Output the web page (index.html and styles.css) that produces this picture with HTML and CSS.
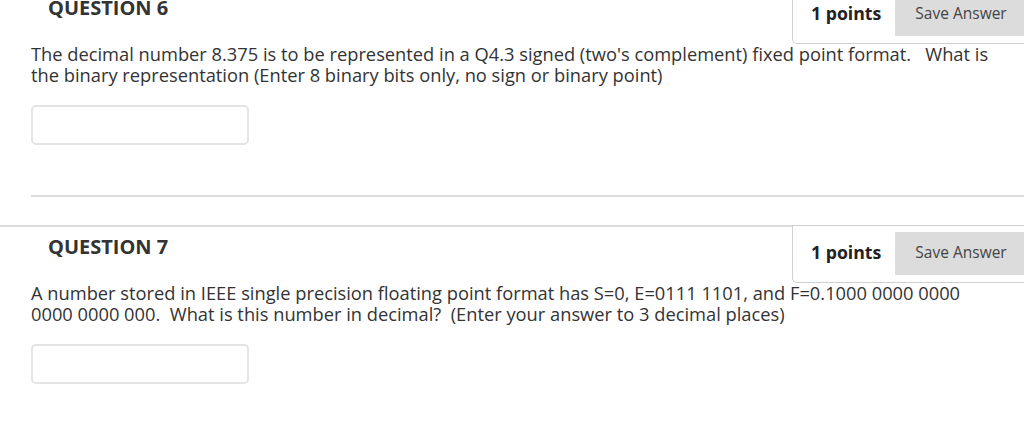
FILE: index.html
```html
<!DOCTYPE html>
<html>
<head>
<meta charset="utf-8">
<link rel="stylesheet" href="styles.css">
</head>
<body>
<div class="page">
  <section class="question">
    <div class="qhead">
      <h3 class="qtitle">QUESTION 6</h3>
      <div class="points-box">
        <span class="points">1 points</span>
        <button class="save">Save Answer</button>
      </div>
    </div>
    <div class="qbody">
      <p class="qtext">The decimal number 8.375 is to be represented in a Q4.3 signed (two's complement) fixed point format.&nbsp;&nbsp; What is the binary representation (Enter 8 binary bits only, no sign or binary point)</p>
      <input class="answer" type="text">
      <div class="divider"></div>
    </div>
  </section>
  <section class="question">
    <div class="qhead">
      <h3 class="qtitle">QUESTION 7</h3>
      <div class="points-box">
        <span class="points">1 points</span>
        <button class="save">Save Answer</button>
      </div>
    </div>
    <div class="qbody">
      <p class="qtext">A number stored in IEEE single precision floating point format has S=0, E=0111 1101, and F=0.1000 0000 0000 0000 0000 000.&nbsp; What is this number in decimal?&nbsp; (Enter your answer to 3 decimal places)</p>
      <input class="answer" type="text">
      <div class="divider"></div>
    </div>
  </section>
</div>
</body>
</html>
```
FILE: styles.css
```css
html, body {
  margin: 0;
  padding: 0;
  background: #fff;
  overflow: hidden;
}
body {
  font-family: "Open Sans", "Liberation Sans", sans-serif;
  color: #333;
}
.page {
  margin-top: -14px;
}
.question {
  border-top: 2px solid #dcdcdc;
  padding-bottom: 28px;
}
.qhead {
  display: flex;
  justify-content: space-between;
  align-items: flex-start;
  margin-top: -2px;
}
.qtitle {
  margin: 0;
  padding: 9px 0 0 48px;
  font-size: 20px;
  font-weight: 700;
  color: #333;
  line-height: 26px;
}
.points-box {
  display: flex;
  align-items: center;
  gap: 14px;
  width: 213px;
  height: 43px;
  padding: 6px 0 7px 18px;
  border: 1px solid #d0d0d0;
  border-right: none;
  border-radius: 0 0 0 5px;
  background: #fff;
}
.points {
  font-size: 17.7px;
  font-weight: 700;
  color: #222;
  margin-top: -4px;
}
.save {
  flex: 1;
  height: 43px;
  border: none;
  background: #dcdcdc;
  color: #444;
  font-family: "Open Sans", "Liberation Sans", sans-serif;
  font-size: 15.5px;
  text-align: left;
  padding: 0 0 2px 20px;
  margin: 0;
  line-height: 1;
}
.qbody {
  padding-left: 31px;
}
.qtext {
  margin: -1px 0 0 0;
  font-size: 18.3px;
  line-height: 21px;
  width: 966px;
}
.answer {
  display: block;
  margin-top: 20px;
  width: 218px;
  height: 40px;
  box-sizing: border-box;
  border: 2px solid #e4e4e4;
  border-radius: 5px;
  background: #fff;
}
.divider {
  margin-top: 50px;
  height: 2px;
  background: #dcdcdc;
}
```
